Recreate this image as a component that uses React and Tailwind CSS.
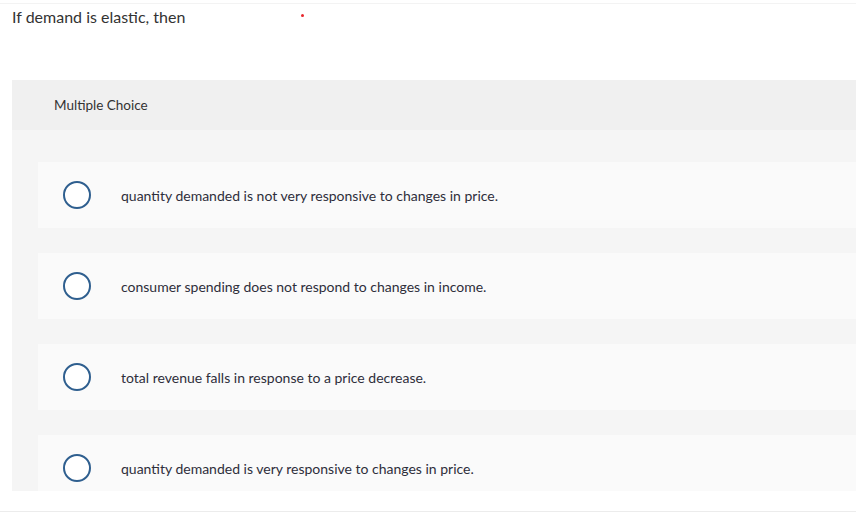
const options = [
  "quantity demanded is not very responsive to changes in price.",
  "consumer spending does not respond to changes in income.",
  "total revenue falls in response to a price decrease.",
  "quantity demanded is very responsive to changes in price.",
];

function Radio() {
  return (
    <span className="w-[28px] h-[28px] rounded-full border-2 border-[#2f5f8f] bg-white shrink-0" />
  );
}

export default function App() {
  return (
    <div className="w-[856px] h-[516px] overflow-hidden bg-white text-[#333] font-['Lato','Open_Sans',sans-serif]">
      <div className="mt-[3px] border-t border-[#f3f3f3]" />

      {/* question */}
      <div className="relative px-3 pt-[3px] h-[76px]">
        <p className="text-[16px] leading-5 text-[#333]">If demand is elastic, then</p>
        <span className="absolute left-[301px] top-[10px] w-[3px] h-[3px] rounded-full bg-[#e8262b]" />
      </div>

      {/* answer panel */}
      <div className="ml-3 h-[411px] overflow-hidden bg-[#f5f5f5]">
        <div className="h-[50px] bg-[#f0f0f0] pl-[42px] flex items-center text-[13.5px] text-[#333]">
          Multiple Choice
        </div>
        <div className="pt-8 pl-[26px] flex flex-col gap-[25px]">
          {options.map((o) => (
            <div key={o} className="h-[66px] shrink-0 bg-[#fafafa] flex items-center pl-[25px]">
              <Radio />
              <span className="ml-[30px] text-[14px] text-[#2e2e3a]">{o}</span>
            </div>
          ))}
        </div>
      </div>

      <div className="mt-[20px] border-t border-[#ececec]" />
    </div>
  );
}
